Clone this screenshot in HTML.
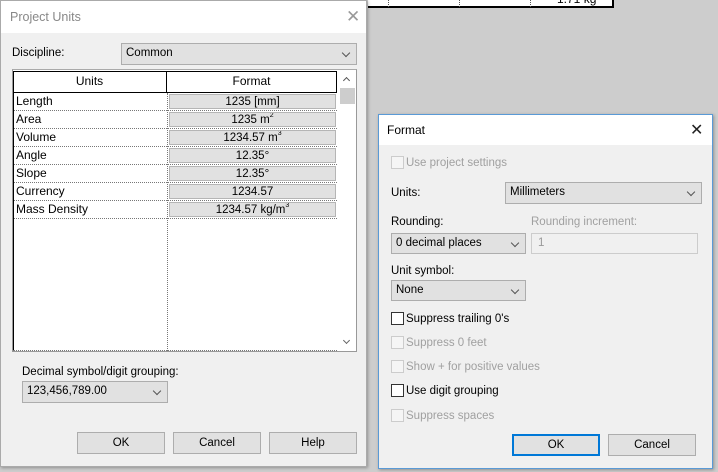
<!DOCTYPE html>
<html><head><style>
*{margin:0;padding:0;box-sizing:border-box}
body{width:718px;height:472px;background:#cdcdcd;position:relative;overflow:hidden;font-family:"Liberation Sans",sans-serif;font-size:11.5px;color:#000}
.a{position:absolute}
.dlg{background:#f0f0f0}
.combo{position:absolute;background:#e1e1e1;border:1px solid #adadad;padding-left:4px;line-height:19px;font-size:11.5px}
.combo:after{content:"";position:absolute;right:7px;top:6px;width:5px;height:5px;border-right:1px solid #555;border-bottom:1px solid #555;transform:rotate(45deg)}
.btn{position:absolute;background:#e1e1e1;border:1px solid #adadad;text-align:center;line-height:20px;font-size:11.5px}
.cb{position:absolute;width:13px;height:13px;border:1px solid #333;background:#fff}
.cb.d{border-color:#ccc;background:#f5f5f5}
.gray{color:#a0a0a0}
.row{position:absolute;left:1px;width:323px;height:18px;border-bottom:1px dotted #777}
.row .n{position:absolute;left:2px;top:1px;font-size:12px}
.row .v{position:absolute;left:155px;top:1px;width:167px;height:15px;background:#e1e1e1;border:1px solid #b5b5b5;text-align:center;line-height:14px;font-size:11.5px;overflow:hidden}
sup{font-size:7px;vertical-align:top;line-height:0;position:relative;top:3px}
</style></head><body>
<div class="a" style="left:368px;top:0;width:246px;height:8px;background:#fff;border-bottom:2px solid #000;border-right:2px solid #000"></div>
<div class="a" style="left:388px;top:0;height:7px;border-left:1px dotted #555"></div>
<div class="a" style="left:459px;top:0;height:7px;border-left:1px dotted #555"></div>
<div class="a" style="left:530px;top:0;height:7px;border-left:1px dotted #555"></div>
<div class="a" style="left:557px;top:-8px;font-size:12px">1.71 kg</div>

<div class="a dlg" style="left:0;top:0;width:367px;height:467px;border:1px solid #aaa;box-shadow:1px 1px 3px rgba(0,0,0,.3)">
 <div class="a" style="left:0;top:0;width:365px;height:32px;background:#fff"></div>
 <div class="a" style="left:9px;top:9px;font-size:12.5px;color:#888">Project Units</div>
 <div class="a" style="left:345px;top:6px;font-size:17px;color:#999">✕</div>
 <div class="a" style="left:11px;top:46px">Discipline:</div>
 <div class="combo" style="left:120px;top:42px;width:236px;height:22px">Common</div>
 <div class="a" style="left:11px;top:68px;width:345px;height:283px;background:#fff;border:1px solid #999;border-top-color:#aaa">
  <div class="a" style="left:0;top:1px;width:324px;height:22px;border-top:1px solid #000;border-bottom:1px solid #000;border-left:1px solid #000"></div>
  <div class="a" style="left:0;top:1px;width:154px;height:22px;text-align:center;line-height:21px;font-size:12px;border-right:1px solid #000">Units</div>
  <div class="a" style="left:154px;top:1px;width:170px;height:22px;text-align:center;line-height:21px;font-size:12px;border-right:1px solid #000">Format</div>
  <div class="a" style="left:154px;top:23px;height:258px;border-left:1px dotted #777"></div>
  <div class="a" style="left:0;top:23px;height:258px;border-left:1px solid #000"></div>
  <div class="a" style="left:0;top:280px;width:324px;border-bottom:1px dotted #777"></div>
  <div class="row" style="top:23px"><span class="n">Length</span><span class="v">1235 [mm]</span></div>
  <div class="row" style="top:41px"><span class="n">Area</span><span class="v">1235 m<sup>2</sup></span></div>
  <div class="row" style="top:59px"><span class="n">Volume</span><span class="v">1234.57 m<sup>3</sup></span></div>
  <div class="row" style="top:77px"><span class="n">Angle</span><span class="v">12.35°</span></div>
  <div class="row" style="top:95px"><span class="n">Slope</span><span class="v">12.35°</span></div>
  <div class="row" style="top:113px"><span class="n">Currency</span><span class="v">1234.57</span></div>
  <div class="row" style="top:131px"><span class="n">Mass Density</span><span class="v">1234.57 kg/m<sup>3</sup></span></div>
  <div class="a" style="left:327px;top:18px;width:15px;height:16px;background:#cdcdcd"></div>
  <div class="a" style="left:331px;top:8px;width:5px;height:5px;border-left:1.5px solid #555;border-top:1.5px solid #555;transform:rotate(45deg)"></div>
  <div class="a" style="left:331px;top:268px;width:5px;height:5px;border-right:1px solid #666;border-bottom:1px solid #666;transform:rotate(45deg)"></div>
 </div>
 <div class="a" style="left:21px;top:365px">Decimal symbol/digit grouping:</div>
 <div class="combo" style="left:21px;top:380px;width:146px;height:22px">123,456,789.00</div>
 <div class="btn" style="left:76px;top:431px;width:88px;height:22px">OK</div>
 <div class="btn" style="left:172px;top:431px;width:88px;height:22px">Cancel</div>
 <div class="btn" style="left:268px;top:431px;width:88px;height:22px">Help</div>
</div>

<div class="a dlg" style="left:378px;top:114px;width:335px;height:355px;border:1px solid #5a9ad6;box-shadow:1px 1px 3px rgba(0,0,0,.3)">
 <div class="a" style="left:0;top:0;width:333px;height:30px;background:#fff"></div>
 <div class="a" style="left:8px;top:8px;font-size:12px">Format</div>
 <div class="a" style="left:311px;top:5px;font-size:16px;color:#222">✕</div>
 <div class="cb d" style="left:12px;top:41px"></div>
 <div class="a gray" style="left:27px;top:42px">Use project settings</div>
 <div class="a" style="left:12px;top:72px">Units:</div>
 <div class="combo" style="left:126px;top:67px;width:197px;height:22px">Millimeters</div>
 <div class="a" style="left:12px;top:101px">Rounding:</div>
 <div class="a gray" style="left:152px;top:101px">Rounding increment:</div>
 <div class="combo" style="left:12px;top:118px;width:135px;height:21px">0 decimal places</div>
 <div class="a" style="left:152px;top:118px;width:167px;height:21px;border:1px solid #ccc;background:#f0f0f0;color:#999;padding-left:6px;line-height:19px">1</div>
 <div class="a" style="left:12px;top:150px">Unit symbol:</div>
 <div class="combo" style="left:12px;top:165px;width:135px;height:21px">None</div>
 <div class="cb" style="left:12px;top:197px"></div>
 <div class="a" style="left:27px;top:198px">Suppress trailing 0's</div>
 <div class="cb d" style="left:12px;top:221px"></div>
 <div class="a gray" style="left:27px;top:222px">Suppress 0 feet</div>
 <div class="cb d" style="left:12px;top:245px"></div>
 <div class="a gray" style="left:27px;top:246px">Show + for positive values</div>
 <div class="cb" style="left:12px;top:269px"></div>
 <div class="a" style="left:27px;top:270px">Use digit grouping</div>
 <div class="cb d" style="left:12px;top:294px"></div>
 <div class="a gray" style="left:27px;top:295px">Suppress spaces</div>
 <div class="btn" style="left:133px;top:319px;width:88px;height:22px;border:2px solid #0078d7;line-height:18px">OK</div>
 <div class="btn" style="left:229px;top:319px;width:88px;height:22px">Cancel</div>
</div>
</body></html>
